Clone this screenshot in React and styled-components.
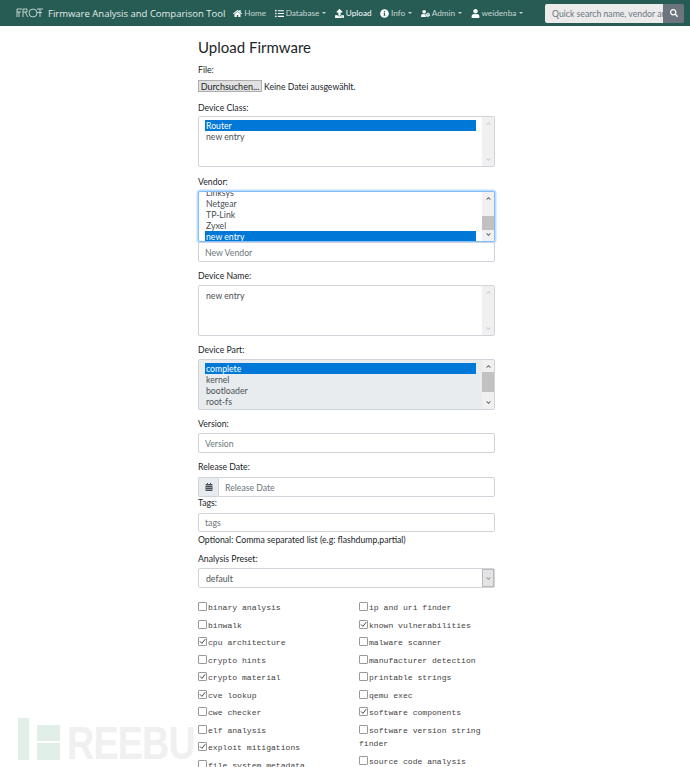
import React from 'react';
import styled, { createGlobalStyle } from 'styled-components';
import {
  FaHome,
  FaListUl,
  FaUpload,
  FaInfoCircle,
  FaUserCog,
  FaUser,
  FaSearch,
  FaCalendarAlt,
  FaChevronUp,
  FaChevronDown,
} from 'react-icons/fa';

const GlobalStyle = createGlobalStyle`
  html, body {
    margin: 0;
    padding: 0;
    height: 767px;
    overflow: hidden;
    background: #fff;
  }
  body {
    font-family: Lato, "Open Sans", sans-serif;
    color: #212529;
  }
`;

const Page = styled.div`
  position: relative;
  width: 690px;
  height: 767px;
  overflow: hidden;
`;

const Navbar = styled.nav`
  display: flex;
  align-items: center;
  height: 26px;
  background: #265c53;
  padding-left: 16px;
`;

const Logo = styled.svg`
  width: 27px;
  height: 10px;
  margin-right: 5px;
  flex: none;
`;

const Brand = styled.span`
  font-family: "Open Sans", sans-serif;
  font-size: 9.5px;
  color: #e4ecea;
  white-space: nowrap;
  margin-right: 8px;
`;

const NavItem = styled.span`
  display: flex;
  align-items: center;
  gap: 2px;
  font-size: 8.2px;
  white-space: nowrap;
  margin-right: 8.5px;
  color: ${(props) => (props.$active ? '#ffffff' : 'rgba(255, 255, 255, 0.75)')};
  svg {
    font-size: 9px;
    color: #fff;
  }
`;

const Caret = styled.i`
  width: 0;
  height: 0;
  margin-left: 1px;
  border-left: 2px solid transparent;
  border-right: 2px solid transparent;
  border-top: 2px solid currentColor;
`;

const Search = styled.div`
  display: flex;
  margin-left: auto;
  margin-right: 6px;
  height: 19px;
`;

const SearchField = styled.div`
  display: flex;
  align-items: center;
  width: 118px;
  box-sizing: border-box;
  padding-left: 7px;
  background: #ebebeb;
  border-radius: 2px 0 0 2px;
  font-size: 8.7px;
  color: #6c757d;
  white-space: nowrap;
  overflow: hidden;
`;

const SearchButton = styled.div`
  display: flex;
  align-items: center;
  justify-content: center;
  width: 21px;
  background: #6c757d;
  border-radius: 0 2px 2px 0;
  color: #fff;
  font-size: 8px;
`;

const Watermark = styled.div`
  position: absolute;
  left: 18px;
  top: 718px;
  display: flex;
  align-items: flex-end;
  height: 42px;
`;

const WatermarkMark = styled.svg`
  width: 44px;
  height: 42px;
`;

const WatermarkText = styled.span`
  font-family: "Liberation Sans", sans-serif;
  font-weight: 700;
  font-size: 46px;
  line-height: 33px;
  color: #f0f0f0;
  letter-spacing: -1px;
  margin-left: 5px;
  transform: scaleX(0.82);
  transform-origin: left bottom;
`;

const Column = styled.main`
  position: relative;
  width: 297px;
  margin-left: 198px;
  padding-top: 13px;
`;

const Cover = styled.div`
  position: absolute;
  left: 0;
  top: 0;
  width: 297px;
  height: 100%;
  background: #fff;
`;

const Title = styled.h3`
  position: relative;
  margin: 0 0 8px;
  font-size: 15px;
  font-weight: 400;
  line-height: 17px;
`;

const Field = styled.div`
  position: relative;
  margin-bottom: ${(props) => props.$gap ?? 8}px;
`;

const Label = styled.div`
  font-size: 8.7px;
  line-height: 11px;
  margin-bottom: ${(props) => props.$gap ?? 4}px;
  color: #212529;
`;

const FileRow = styled.div`
  display: flex;
  align-items: center;
  gap: 2px;
  font-size: 8.7px;
  height: 12px;
`;

const FileButton = styled.span`
  display: flex;
  align-items: center;
  justify-content: center;
  width: 64px;
  height: 12px;
  box-sizing: border-box;
  background: #e1e1e1;
  border: 1px solid #adadad;
  font-size: 9px;
`;

const ListBox = styled.div`
  display: flex;
  box-sizing: border-box;
  height: ${(props) => props.$height || 51}px;
  background: ${(props) => (props.$disabled ? '#e9ecef' : '#fff')};
  border: 1px solid ${(props) => (props.$focused ? '#80bdff' : '#ced4da')};
  border-radius: 2px;
  box-shadow: ${(props) => (props.$focused ? '0 0 0 1.5px rgba(0, 123, 255, 0.25)' : 'none')};
  overflow: hidden;
`;

const Options = styled.div`
  flex: 1;
  min-width: 0;
  padding: ${(props) => props.$top ?? 3}px 6px 0;
  overflow: hidden;
  font-size: 8.7px;
  line-height: 11px;
  color: #495057;
`;

const Option = styled.div`
  padding-left: 1px;
  height: 11px;
  margin-top: ${(props) => props.$shift || 0}px;
  background: ${(props) => (props.$selected ? '#0078d7' : 'transparent')};
  color: ${(props) => (props.$selected ? '#fff' : 'inherit')};
`;

const Scrollbar = styled.div`
  position: relative;
  display: flex;
  flex-direction: column;
  justify-content: space-between;
  align-items: center;
  width: 12px;
  flex: none;
  background: #f0f0f0;
  padding: 4px 0;
  box-sizing: border-box;
  color: ${(props) => (props.$muted ? '#c4c4c4' : '#444')};
  svg {
    font-size: 5px;
  }
`;

const Thumb = styled.div`
  position: absolute;
  left: 0;
  right: 0;
  top: ${(props) => props.$top}px;
  height: ${(props) => props.$height}px;
  background: #c1c1c1;
`;

const Input = styled.div`
  display: flex;
  align-items: center;
  box-sizing: border-box;
  flex: 1;
  height: ${(props) => props.$height || 20}px;
  padding-left: 6px;
  background: #fff;
  border: 1px solid #ced4da;
  border-radius: ${(props) => (props.$joined ? '0 2px 2px 0' : '2px')};
  font-size: 8.7px;
  color: #6c757d;
`;

const InputGroup = styled.div`
  display: flex;
`;

const Addon = styled.div`
  display: flex;
  align-items: center;
  justify-content: center;
  box-sizing: border-box;
  width: 20px;
  height: 20px;
  background: #e9ecef;
  border: 1px solid #ced4da;
  border-right: none;
  border-radius: 2px 0 0 2px;
  font-size: 8px;
  color: #495057;
`;

const Hint = styled.div`
  font-size: 8.7px;
  line-height: 11px;
  margin-top: 2px;
`;

const Select = styled.div`
  display: flex;
  align-items: center;
  justify-content: space-between;
  box-sizing: border-box;
  height: 20px;
  padding-left: 7px;
  border: 1px solid #ced4da;
  border-radius: 2px;
  font-size: 8.7px;
  color: #495057;
`;

const SelectArrow = styled.div`
  display: flex;
  align-items: center;
  justify-content: center;
  width: 12px;
  height: 18px;
  background: #e4e4e4;
  border: 1px solid #bbbbbb;
  box-sizing: border-box;
  color: #888;
  svg {
    font-size: 5px;
  }
`;

const Plugins = styled.div`
  position: relative;
  display: grid;
  grid-template-columns: 161px 136px;
  margin-top: 13px;
`;

const PluginColumn = styled.div`
  display: flex;
  flex-direction: column;
`;

const Plugin = styled.div`
  font-family: "Liberation Mono", monospace;
  font-size: 8.08px;
  line-height: 13.5px;
  margin-bottom: 4px;
  color: #444;
`;

const Check = styled.span`
  position: relative;
  display: inline-block;
  vertical-align: -1px;
  box-sizing: border-box;
  width: 9px;
  height: 9px;
  margin-right: 1px;
  background: #fff;
  border: 1px solid #999;
  border-radius: 1px;
  svg {
    position: absolute;
    left: 0;
    top: 0;
    width: 7px;
    height: 7px;
  }
`;

function PluginRow({ name, checked }) {
  return (
    <Plugin>
      <Check>
        {checked && (
          <svg viewBox="0 0 7 7">
            <path d="M1 3.4 L2.9 5.4 L6.2 1.2" fill="none" stroke="#333" strokeWidth="0.9" />
          </svg>
        )}
      </Check>
      {name}
    </Plugin>
  );
}

const leftPlugins = [
  ['binary analysis', false],
  ['binwalk', false],
  ['cpu architecture', true],
  ['crypto hints', false],
  ['crypto material', true],
  ['cve lookup', true],
  ['cwe checker', false],
  ['elf analysis', false],
  ['exploit mitigations', true],
  ['file system metadata', false],
];

const rightPlugins = [
  ['ip and uri finder', false],
  ['known vulnerabilities', true],
  ['malware scanner', false],
  ['manufacturer detection', false],
  ['printable strings', false],
  ['qemu exec', false],
  ['software components', true],
  ['software version string finder', false],
  ['source code analysis', false],
];

function Scroll({ muted, thumbTop, thumbHeight }) {
  return (
    <Scrollbar $muted={muted}>
      <FaChevronUp />
      {thumbHeight && <Thumb $top={thumbTop} $height={thumbHeight} />}
      <FaChevronDown />
    </Scrollbar>
  );
}

export default function App() {
  return (
    <Page>
      <GlobalStyle />
      <Navbar>
        <Logo viewBox="0 0 27 10" fill="none" stroke="#e4ecea" strokeWidth="0.8">
          <path d="M6 1 H1 V9 M1 4 H5 M3 4 V9 M7 9 V1 H11 V4 H7 M9 4 L12 9" />
          <circle cx="17" cy="5" r="4" />
          <path d="M21 1 H27 M24 1 V9 M21 4.5 H26" />
        </Logo>
        <Brand>Firmware Analysis and Comparison Tool</Brand>
        <NavItem><FaHome />Home</NavItem>
        <NavItem><FaListUl />Database<Caret /></NavItem>
        <NavItem $active><FaUpload />Upload</NavItem>
        <NavItem><FaInfoCircle />Info<Caret /></NavItem>
        <NavItem><FaUserCog />Admin<Caret /></NavItem>
        <NavItem><FaUser />weidenba<Caret /></NavItem>
        <Search>
          <SearchField>Quick search name, vendor ar</SearchField>
          <SearchButton><FaSearch /></SearchButton>
        </Search>
      </Navbar>

      <Watermark>
        <WatermarkMark viewBox="0 0 44 42">
          <path d="M0 0 H11 V42 H0 Z" fill="#e2efe9" />
          <path d="M19 7 H42 V23 H19 Z M19 25 H42 V42 H19 Z" fill="#e2efe9" />
        </WatermarkMark>
        <WatermarkText>REEBU</WatermarkText>
      </Watermark>

      <Column>
        <Cover />
        <Title>Upload Firmware</Title>

        <Field $gap={10}>
          <Label $gap={5}>File:</Label>
          <FileRow>
            <FileButton>Durchsuchen...</FileButton>
            Keine Datei ausgewählt.
          </FileRow>
        </Field>

        <Field $gap={9}>
          <Label $gap={3}>Device Class:</Label>
          <ListBox>
            <Options>
              <Option $selected>Router</Option>
              <Option>new entry</Option>
            </Options>
            <Scroll muted />
          </ListBox>
        </Field>

        <Field>
          <Label>Vendor:</Label>
          <ListBox $focused>
            <Options $top={0}>
              <Option $shift={-5}>Linksys</Option>
              <Option>Netgear</Option>
              <Option>TP-Link</Option>
              <Option>Zyxel</Option>
              <Option $selected>new entry</Option>
            </Options>
            <Scroll thumbTop={24} thumbHeight={14} />
          </ListBox>
          <Input>New Vendor</Input>
        </Field>

        <Field>
          <Label>Device Name:</Label>
          <ListBox>
            <Options $top={4}>
              <Option>new entry</Option>
            </Options>
            <Scroll muted />
          </ListBox>
        </Field>

        <Field>
          <Label>Device Part:</Label>
          <ListBox $disabled>
            <Options>
              <Option $selected>complete</Option>
              <Option>kernel</Option>
              <Option>bootloader</Option>
              <Option>root-fs</Option>
            </Options>
            <Scroll thumbTop={12} thumbHeight={20} />
          </ListBox>
        </Field>

        <Field>
          <Label>Version:</Label>
          <Input>Version</Input>
        </Field>

        <Field $gap={0}>
          <Label $gap={5}>Release Date:</Label>
          <InputGroup>
            <Addon><FaCalendarAlt /></Addon>
            <Input $joined>Release Date</Input>
          </InputGroup>
        </Field>

        <Field>
          <Label $gap={5}>Tags:</Label>
          <Input $height={19}>tags</Input>
          <Hint>Optional: Comma separated list (e.g: flashdump,partial)</Hint>
        </Field>

        <Field $gap={0}>
          <Label>Analysis Preset:</Label>
          <Select>
            default
            <SelectArrow><FaChevronDown /></SelectArrow>
          </Select>
        </Field>

        <Plugins>
          <PluginColumn>
            {leftPlugins.map(([name, checked]) => (
              <PluginRow key={name} name={name} checked={checked} />
            ))}
          </PluginColumn>
          <PluginColumn>
            {rightPlugins.map(([name, checked]) => (
              <PluginRow key={name} name={name} checked={checked} />
            ))}
          </PluginColumn>
        </Plugins>
      </Column>
    </Page>
  );
}
